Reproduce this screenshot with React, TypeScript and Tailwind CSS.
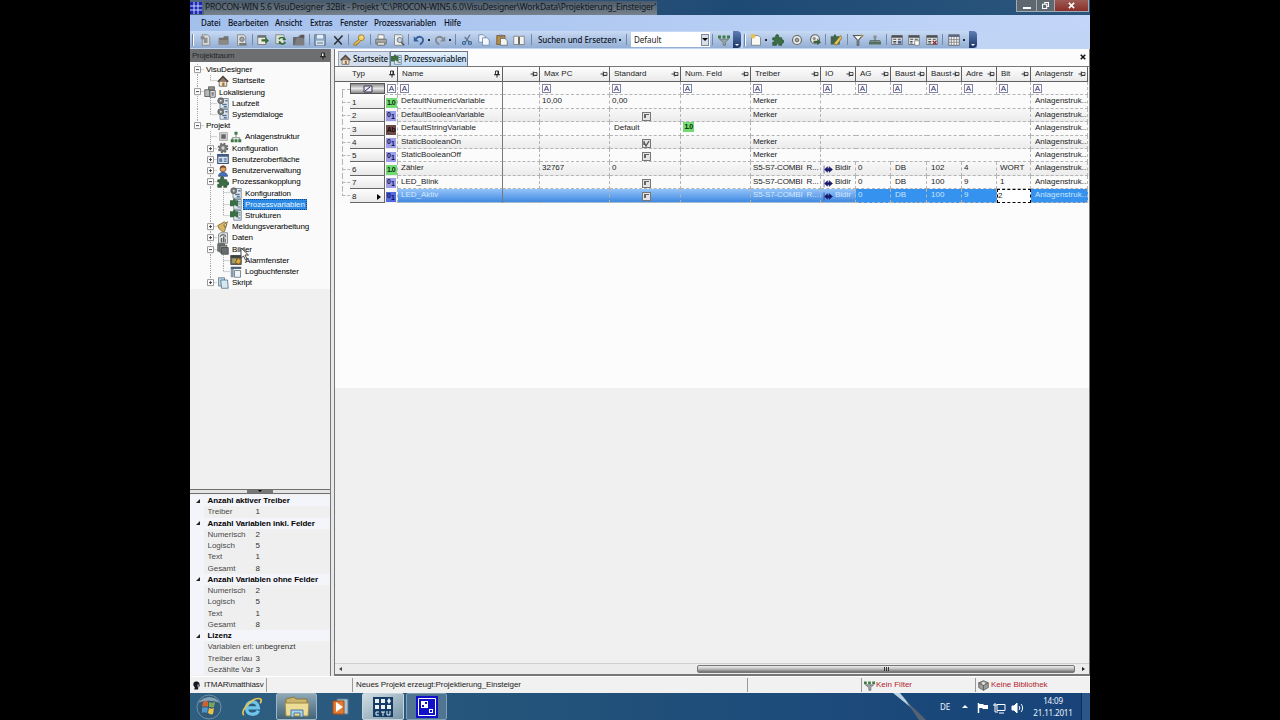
import { Fragment } from "react";
import type { ReactNode } from "react";
import clsx from "clsx";

const ICONS: Record<string, ReactNode> = {
    doc: (
        <>
            <path d="M3 1h7l3 3v11H3z" fill="#d9dbda" stroke="#77797c" />
            <path d="M5 5h5v7H5z" fill="#8f9191" />
            <path d="M1 3h5v4H1z" fill="#858789" />
        </>
    ),
    folder: (
        <>
            <path d="M1 5h6l1-2h6v11H1z" fill="#74736f" />
            <path d="M1 8h12v6H1z" fill="#8a8983" />
        </>
    ),
    docSearch: (
        <>
            <path d="M2 1h9l2 3v11H2z" fill="#dcdedd" stroke="#77797c" />
            <circle cx="8" cy="7" r="3" fill="#9ea3a5" stroke="#66696b" />
            <path d="M4 12h9l2 3H5z" fill="#777" />
        </>
    ),
    export: (
        <>
            <path d="M1 2h11v12H1z" fill="#e9ebe4" stroke="#696b6d" />
            <path d="M1 2h11v3H1z" fill="#6e7278" />
            <path d="M6 7h5V4l5 5-5 4v-3H6z" fill="#3e6b34" />
        </>
    ),
    refresh: (
        <>
            <path d="M1 1h11v12H1z" fill="#dfe3dc" stroke="#71757a" />
            <path d="M5 7c2-3 6-3 8 0M14 11c-2 3-6 3-8 0" stroke="#2f6c32" strokeWidth="2" fill="none" />
            <path d="M12 4l3 4h-5zM5 14V9l4 2z" fill="#2f6c32" />
        </>
    ),
    closedFolder: (
        <>
            <path d="M0 4h7l1-2h7v13H0z" fill="#66686b" />
            <path d="M5 5h9l1 10H2z" fill="#7c7e80" />
            <path d="M10 1h5v4h-5z" fill="#5b5456" />
        </>
    ),
    save: (
        <>
            <path d="M1 1h14v14H1z" fill="#8da6c4" stroke="#48617c" />
            <path d="M4 1h8v5H4z" fill="#e5edf6" />
            <path d="M3 9h10v6H3z" fill="#f1f5f9" />
            <path d="M4 11h8M4 13h8" stroke="#64788d" />
        </>
    ),
    cross: <path d="M3 3l10 11M14 2L3 14" stroke="#30343c" strokeWidth="2.2" />,
    key: (
        <>
            <circle cx="11" cy="5" r="4" fill="#efcf5d" stroke="#8f6b1f" />
            <path d="M8 7l-7 6v2h4v-2h2l3-4" fill="#e4b945" stroke="#8f6b1f" />
            <circle cx="12" cy="4" r="1" fill="#fff" />
        </>
    ),
    printer: (
        <>
            <path d="M4 1h8v6H4z" fill="#f4f4f0" stroke="#6f7271" />
            <path d="M1 7h14v6H1z" fill="#a8aaa8" stroke="#5e605f" />
            <path d="M3 11h10v4H3z" fill="#dddcd0" stroke="#5e605f" />
        </>
    ),
    preview: (
        <>
            <path d="M2 1h9l2 2v12H2z" fill="#eef0ee" stroke="#71757a" />
            <circle cx="9" cy="8" r="3.5" fill="#c0cfda" stroke="#5b646d" />
            <path d="M11 11l4 4" stroke="#4a525b" strokeWidth="2" />
        </>
    ),
    undo: (
        <>
            <path d="M4 6c5-5 11-1 9 4-1 2-2 3-4 4" stroke="#35609d" strokeWidth="2.4" fill="none" />
            <path d="M1 3v7h7z" fill="#35609d" />
        </>
    ),
    redo: (
        <>
            <path d="M12 6C7 1 1 5 3 10c1 2 2 3 4 4" stroke="#85888c" strokeWidth="2.4" fill="none" />
            <path d="M15 3v7H8z" fill="#85888c" />
        </>
    ),
    cut: (
        <>
            <path d="M12 1L6 11M5 4l6 7" stroke="#5f7386" strokeWidth="1.6" />
            <circle cx="4" cy="12" r="2" fill="none" stroke="#315f93" strokeWidth="1.6" />
            <circle cx="12" cy="12" r="2" fill="none" stroke="#315f93" strokeWidth="1.6" />
        </>
    ),
    copy: (
        <>
            <path d="M1 1h6l3 3v7H1z" fill="#f3f7fb" stroke="#5f7da5" />
            <path d="M6 5h6l3 3v7H6z" fill="#f3f7fb" stroke="#5f7da5" />
        </>
    ),
    paste: (
        <>
            <path d="M1 2h11v12H1z" fill="#b78c42" stroke="#6c5326" />
            <path d="M4 1h5v3H4z" fill="#777" />
            <path d="M6 6h6l3 3v6H6z" fill="#f5f5f0" stroke="#60656e" />
        </>
    ),
    book: (
        <>
            <path d="M1 3h6l1 1 1-1h6v11H9l-1 1-1-1H1z" fill="#f4f3ee" stroke="#6d6f72" />
            <path d="M8 4v10" stroke="#3b3d40" strokeWidth="2" />
        </>
    ),
    filterTree: (
        <>
            <path d="M0 2h4v4H0zM6 2h4v4H6zM12 2h4v4h-4z" fill="#3f7b47" />
            <path d="M2 7h12l-4 4v4H7v-4z" fill="#98a4a5" stroke="#66706f" />
        </>
    ),
    newDoc: (
        <>
            <path d="M2 2h9l3 3v10H2z" fill="#f8f8f4" stroke="#6f7278" />
            <circle cx="4" cy="3" r="3" fill="#e8c04d" />
        </>
    ),
    puzzle: (
        <path
            d="M1 5h4c-2-4 4-6 4-2v2h4v3c4-1 4 5 0 4v3H9c1-3-4-3-3 0H1v-4c3 1 3-4 0-3z"
            fill="#3c6e45"
            stroke="#29502f"
        />
    ),
    target: (
        <>
            <circle cx="8" cy="8" r="6" fill="#e9eae6" stroke="#686a6a" strokeWidth="1.6" />
            <circle cx="8" cy="8" r="2.5" fill="#9da09d" stroke="#555" />
        </>
    ),
    targetGreen: (
        <>
            <circle cx="8" cy="7" r="6" fill="#e9eae6" stroke="#686a6a" strokeWidth="1.6" />
            <path d="M6 9h5V6l5 5-5 4v-3H6z" fill="#3e5f3e" />
            <circle cx="7" cy="6" r="2" fill="#888" />
        </>
    ),
    puzzleKey: (
        <>
            <path d="M1 3h4c-1-3 4-3 3 0h5v11H1z" fill="#41634a" />
            <path d="M14 2l-9 11 4 2 7-10z" fill="#dcc15c" stroke="#7d6923" />
        </>
    ),
    filter: (
        <>
            <path d="M2 2h12l-5 6v7H7V8z" fill="#f3f3f1" stroke="#55585c" strokeWidth="1.5" />
            <path d="M12 1l2 3" stroke="#b59b4a" strokeWidth="2" />
        </>
    ),
    network: (
        <>
            <path d="M6 2h4v4H6z" fill="#8a8d8f" />
            <path d="M8 6v3M1 9h14" stroke="#56605a" strokeWidth="1.5" />
            <path d="M0 10h16v4H0z" fill="#52715a" />
        </>
    ),
    table: (
        <>
            <path d="M1 2h14v12H1z" fill="#eceded" stroke="#55595c" />
            <path d="M1 2h14v3H1z" fill="#4c5054" />
            <path d="M3 7h4M9 7h4M3 10h4M3 12h4" stroke="#3f4448" strokeWidth="1.6" />
            <path d="M9 9h5v4H9z" fill="#47638f" />
        </>
    ),
    tableDoc: (
        <>
            <path d="M1 2h14v12H1z" fill="#eceded" stroke="#55595c" />
            <path d="M1 2h14v3H1z" fill="#4c5054" />
            <path d="M3 7h4M9 7h4M3 10h3M3 12h3" stroke="#3f4448" strokeWidth="1.6" />
            <path d="M9 9h6v6H9z" fill="#fff" stroke="#777" />
        </>
    ),
    tableRed: (
        <>
            <path d="M1 2h14v12H1z" fill="#eceded" stroke="#55595c" />
            <path d="M1 2h14v3H1z" fill="#4c5054" />
            <path d="M3 7h4M9 7h4M3 10h4M3 12h4" stroke="#3f4448" strokeWidth="1.6" />
            <path d="M9 9l5 5M14 9l-5 5" stroke="#8a3038" strokeWidth="1.8" />
        </>
    ),
    grid: (
        <>
            <path d="M1 1h14v14H1z" fill="#f6f6f6" stroke="#4c5054" />
            <path d="M1 1h14v3H1z" fill="#5c6b86" />
            <path d="M1 7.5h14M1 11h14M4.5 4v11M8 4v11M11.5 4v11" stroke="#777" />
        </>
    ),
    home: (
        <>
            <path d="M3 8h10v7H3z" fill="#eee6d4" stroke="#5e5148" />
            <path d="M1 9l7-7 7 7" fill="#8b7768" stroke="#4e4137" strokeWidth="2" />
            <path d="M7 10h3v5H7z" fill="#a8743c" />
        </>
    ),
    language: (
        <>
            <path d="M1 5h7v9H1z" fill="#b7b8b8" stroke="#454749" />
            <path d="M6 1h8v4H6z" fill="#8e9092" stroke="#555" />
            <path d="M8 6h7v9H8z" fill="#dfe2e4" stroke="#454749" />
            <path d="M10 8h3v5h-3z" fill="#7d8689" />
        </>
    ),
    gearPage: (
        <>
            <path d="M4 2h11v13H4z" fill="#e6eaec" stroke="#5c7487" />
            <path d="M7 10h6M9 13h4M11 5h3" stroke="#4c7298" strokeWidth="1.8" />
            <circle cx="5" cy="5" r="4" fill="#7a7c7d" stroke="#55585a" />
            <circle cx="5" cy="5" r="1.3" fill="#ddd" />
        </>
    ),
    puzzlePage: (
        <>
            <path d="M5 2h10v13H5z" fill="#e6eaec" stroke="#5c7487" />
            <path d="M11 5h3M10 12h4M12 8h2" stroke="#4c7298" strokeWidth="1.6" />
            <path d="M0 3h4c0-3 4-3 3 0h4v8H8c0-2-3-2-3 0H0z" fill="#3c6e45" />
        </>
    ),
    gear: (
        <>
            <circle cx="8" cy="8" r="5.6" fill="#77797a" stroke="#67696a" strokeWidth="3" strokeDasharray="2.4 2" />
            <circle cx="8" cy="8" r="5" fill="#77797a" />
            <circle cx="8" cy="8" r="2.2" fill="#d2d3d3" />
        </>
    ),
    structure: (
        <>
            <path d="M8 5v3M3 12V9h10v3" fill="none" stroke="#58705c" />
            <path d="M6 1h4v4H6zM1 11h4v4H1zM6 11h4v4H6zM11 11h4v4h-4z" fill="#3b7a45" />
        </>
    ),
    checkBox: (
        <>
            <path d="M1 1h14v14H1z" fill="#d5d5d5" stroke="#888" />
            <path d="M4 4h8v8H4z" fill="#666" />
        </>
    ),
    windowUi: (
        <>
            <path d="M1 2h14v12H1z" fill="#dce4ef" stroke="#3d536e" strokeWidth="1.5" />
            <path d="M1 2h14v3H1z" fill="#405e8a" />
            <path d="M3 7h4v5H3zM9 7h4v2H9zM9 10h4v2H9z" fill="#607fa9" />
        </>
    ),
    user: (
        <>
            <circle cx="8" cy="5" r="4" fill="#e0a060" stroke="#65442b" />
            <path d="M4 5c0-5 8-5 8-1-3-1-5-1-8 1z" fill="#7a4526" />
            <path d="M2 15c0-7 12-7 12 0z" fill="#4872b8" stroke="#2f4d87" />
        </>
    ),
    bell: (
        <>
            <path d="M1 6l9-5 3 3-3 10c-3 1-8-3-9-8z" fill="#d7b565" stroke="#765f31" />
            <path d="M9 5l5-4-3 8z" fill="#f4e4a1" stroke="#6c5630" />
        </>
    ),
    data: (
        <>
            <path d="M2 3l3-2h9v14H2z" fill="#e2e4e5" stroke="#707274" />
            <path d="M5 8h2v6H5zM8 6h2v8H8zM11 9h1v5h-1z" fill="#5e6163" />
            <path d="M4 6c2-3 6-3 8 0" stroke="#3c4042" strokeWidth="1.4" fill="none" />
        </>
    ),
    images: (
        <>
            <path d="M1 1h9v10H1z" fill="#777b7b" stroke="#4c5050" />
            <path d="M4 3h9v10H4z" fill="#8d9292" stroke="#4c5050" />
            <path d="M6 6h9v9H6z" fill="#686d6d" stroke="#444" />
        </>
    ),
    alarm: (
        <>
            <path d="M1 2h14v12H1z" fill="#6c6e5c" stroke="#3b3b38" />
            <path d="M1 2h14v3H1z" fill="#3b3f3d" />
            <path d="M3 6h5v6H3z" fill="#a8a263" />
            <path d="M11 5l4 4-3 5-5-3z" fill="#dfa73f" stroke="#6d4f1c" />
        </>
    ),
    logbook: (
        <>
            <path d="M1 1h14v3H1z" fill="#4d6379" />
            <path d="M1 4h4v11H1z" fill="#859aac" />
            <path d="M6 6h8v9H6z" fill="#eff3f6" stroke="#55697b" />
        </>
    ),
    script: (
        <>
            <path d="M2 1h8v11H2z" fill="#bfd3df" stroke="#55748b" />
            <path d="M5 4h9l1 11H6z" fill="#d6e7f1" stroke="#44657d" />
        </>
    ),
    cube: (
        <>
            <path d="M8 1l7 3v7l-7 4-7-4V4z" fill="#9a9b9a" stroke="#4b4c4b" />
            <path d="M1 4l7 4 7-4M8 8v7" stroke="#4b4c4b" fill="none" />
            <circle cx="8" cy="5" r="2" fill="#e7e7e5" />
        </>
    ),
    head: (
        <>
            <path d="M3 3c2-3 9-3 10 1l1 5-3 2v4H4l1-4c-3-2-3-5-2-8z" fill="#16161f" />
            <path d="M9 6h4v5h-3z" fill="#8f8aa0" />
        </>
    ),
    pinDown: (
        <>
            <path d="M5 2h6v7H5z" fill="#f5f5f5" stroke="#222" strokeWidth="1.8" />
            <path d="M10 2v7M2 9.500h12M8 10v5" stroke="#222" strokeWidth="2" />
        </>
    ),
    pinSide: (
        <>
            <path d="M7 5h7v6H7z" fill="#f5f5f5" stroke="#333" strokeWidth="1.6" />
            <path d="M6.500 3v10M1 8h5M7 10.500h7" stroke="#333" strokeWidth="1.800" />
        </>
    ),
    bidir: <path d="M1 1v14M2 8l5-5v3h3V3l6 5-6 5v-3H7v3z" fill="#17176a" stroke="#17176a" />,
};

function Icon({ name, className }: { name: string; className?: string }) {
    return (
        <svg viewBox="0 0 16 16" className={clsx("shrink-0", className ?? "size-3")}>
            {ICONS[name]}
        </svg>
    );
}

// [icon, slot width]; "|" is a separator and "." a drop-down dot
const FILE_TOOLS: [string, string][] = [
    ["doc", "w-[18px]"],
    ["folder", "w-[18px]"],
    ["docSearch", "w-[18px]"],
    ["|", "w-[3px]"],
    ["export", "w-[18px]"],
    ["refresh", "w-[18px]"],
    ["closedFolder", "w-[17px]"],
    ["|", "w-[4px]"],
    ["save", "w-[18px]"],
    ["cross", "w-[17px]"],
    ["|", "w-[4px]"],
    ["key", "w-[18px]"],
    ["|", "w-[4px]"],
    ["printer", "w-[18px]"],
    ["preview", "w-[17px]"],
    ["|", "w-[3px]"],
    ["undo", "w-[17px]"],
    [".", "w-[4px]"],
    ["redo", "w-[17px]"],
    [".", "w-[4px]"],
    ["|", "w-[6px]"],
    ["cut", "w-[17px]"],
    ["copy", "w-[18px]"],
    ["paste", "w-[17px]"],
    ["book", "w-[18px]"],
    ["|", "w-[6px]"],
];

const VARIABLE_TOOLS: [string, string][] = [
    ["newDoc", "w-[16px]"],
    [".", "w-[4px]"],
    ["puzzle", "w-[19px]"],
    ["target", "w-[19px]"],
    ["targetGreen", "w-[18px]"],
    ["|", "w-[3px]"],
    ["puzzleKey", "w-[18px]"],
    ["|", "w-[4px]"],
    ["filter", "w-[17px]"],
    ["network", "w-[18px]"],
    ["|", "w-[4px]"],
    ["table", "w-[17px]"],
    ["tableDoc", "w-[18px]"],
    ["tableRed", "w-[17px]"],
    ["|", "w-[5px]"],
    ["grid", "w-[17px]"],
    [".", "w-[3px]"],
];

function Tools({ items }: { items: [string, string][] }) {
    return (
        <>
            {items.map(([name, width], i) => (
                <div key={i} className={clsx("flex shrink-0 items-center justify-center", width)}>
                    {name === "|" && <span className="h-[11px] w-px bg-[#7188a8]" />}
                    {name === "." && <span className="size-[2px] bg-[#222a38]" />}
                    {name.length > 1 && <Icon name={name} />}
                </div>
            ))}
        </>
    );
}

function ToolbarEnd() {
    return (
        <div className="flex h-[17px] w-[8px] shrink-0 items-end justify-center rounded-r-sm bg-linear-to-b from-[#5f7fb5] to-[#1c3466] pb-[2px]">
            <span className="border-x-2 border-t-2 border-x-transparent border-t-white" />
        </div>
    );
}

function TitleBar() {
    return (
        <div className="flex h-[15px] items-center bg-linear-to-r from-[#536779] via-[#1d4a75] via-60% to-[#2b557c]">
            <svg viewBox="0 0 12 12" className="size-3 shrink-0 bg-[#1b28b0]">
                <path d="M0 4h12M0 8h12M4 0v12M8 0v12" stroke="#cdd4ff" strokeWidth="1" />
            </svg>
            <div className="ml-[2px] flex h-[14px] w-[453px] items-center bg-linear-to-b from-[#4b5a69] to-[#77828c] font-['Noto_Sans'] text-[8.5px] tracking-[-0.21px] text-[#10161c]">
                <span className="ml-px whitespace-nowrap">
                    PROCON-WIN 5.6 VisuDesigner 32Bit - Projekt 'C:\PROCON-WIN5.6.0\VisuDesigner\WorkData\Projektierung_Einsteiger'
                </span>
            </div>
            <div className="ml-auto mr-px flex h-[12px] self-start border border-t-0 border-[#a1aab2]">
                <div className="flex w-[20px] items-center justify-center border-r border-[#a1aab2] bg-[#5d6870]">
                    <span className="mt-1 h-[2px] w-[8px] bg-white" />
                </div>
                <div className="flex w-[18px] items-center justify-center border-r border-[#a1aab2] bg-[#5d6870]">
                    <svg viewBox="0 0 8 8" className="size-[7px]" fill="none" stroke="#fff" strokeWidth="1.2">
                        <path d="M3 2V.6h4.400V5H6" />
                        <path d="M.6 2.600h4.800v4.800H.6z" />
                    </svg>
                </div>
                <div className="flex w-[33px] items-center justify-center bg-linear-to-b from-[#9c5a55] to-[#8a2d27]">
                    <svg viewBox="0 0 8 8" className="size-[7px]" stroke="#fff" strokeWidth="1.8">
                        <path d="M1 1l6 6M7 1L1 7" />
                    </svg>
                </div>
            </div>
        </div>
    );
}

const MENU: [string, string][] = [
    ["Datei", "w-[27px]"],
    ["Bearbeiten", "w-[47px]"],
    ["Ansicht", "w-[35px]"],
    ["Extras", "w-[30px]"],
    ["Fenster", "w-[34px]"],
    ["Prozessvariablen", "w-[70px]"],
    ["Hilfe", "w-[24px]"],
];

function MenuBar() {
    return (
        <div className="flex h-4 items-center bg-linear-to-r from-[#a3c0ec] to-[#c3d6f9] pl-[11px] font-['Noto_Sans'] text-[8px] font-medium tracking-[-0.16px] text-[#0a1020]">
            {MENU.map(([label, width]) => (
                <span key={label} className={clsx("whitespace-nowrap", width)}>
                    {label}
                </span>
            ))}
        </div>
    );
}

function Toolbar() {
    return (
        <div className="flex h-[18px] bg-[#c0d4f6]">
            <div className="flex h-[17px] items-center bg-linear-to-b from-[#c8daf4] to-[#93aed3] pl-[2px]">
                <span className="h-3 w-[2px] border-l border-[#6b83a6] bg-white" />
                <div className="w-[3px]" />
                <Tools items={FILE_TOOLS} />
                <span className="ml-[4px] w-[79px] whitespace-nowrap font-['Noto_Sans'] text-[8px] font-medium tracking-[-0.06px] text-[#10182a]">
                    Suchen und Ersetzen
                </span>
                <Tools items={[[".", "w-[5px]"], ["|", "w-[9px]"]]} />
                <div className="flex h-[15px] w-[79px] items-center justify-between bg-white pl-[3px] pr-px font-['Noto_Sans'] text-[8px] text-[#222]">
                    Default
                    <span className="flex h-3 w-[8px] items-center justify-center border border-[#7d8998] bg-[#d5dfeb]">
                        <span className="border-x-[3px] border-t-[3px] border-x-transparent border-t-black" />
                    </span>
                </div>
                <Tools items={[["|", "w-[5px]"], ["filterTree", "w-[18px]"]]} />
                <ToolbarEnd />
            </div>
            <div className="ml-[2px] flex h-[17px] items-center bg-linear-to-b from-[#c8daf4] to-[#93aed3] pl-px">
                <span className="mr-[2px] h-3 w-[2px] border-l border-[#6b83a6] bg-white" />
                <Tools items={VARIABLE_TOOLS} />
                <div className="w-[4px]" />
                <ToolbarEnd />
            </div>
        </div>
    );
}

interface TreeNode {
    label: string;
    level: number;
    icons?: string[];
    toggle?: "+" | "-";
    selected?: boolean;
    last?: boolean;
}

const TREE: TreeNode[] = [
    { label: "VisuDesigner", level: 0, toggle: "-" },
    { label: "Startseite", level: 1, icons: ["home"], last: true },
    { label: "Lokalisierung", level: 0, toggle: "-", icons: ["language"] },
    { label: "Laufzeit", level: 1, icons: ["gearPage"] },
    { label: "Systemdialoge", level: 1, icons: ["gearPage"], last: true },
    { label: "Projekt", level: 0, toggle: "-", last: true },
    { label: "Anlagenstruktur", level: 1, icons: ["checkBox", "structure"] },
    { label: "Konfiguration", level: 1, toggle: "+", icons: ["gear"] },
    { label: "Benutzeroberfläche", level: 1, toggle: "+", icons: ["windowUi"] },
    { label: "Benutzerverwaltung", level: 1, toggle: "+", icons: ["user"] },
    { label: "Prozessankopplung", level: 1, toggle: "-", icons: ["puzzle"] },
    { label: "Konfiguration", level: 2, icons: ["gearPage"] },
    { label: "Prozessvariablen", level: 2, icons: ["puzzlePage"], selected: true },
    { label: "Strukturen", level: 2, icons: ["puzzlePage"], last: true },
    { label: "Meldungsverarbeitung", level: 1, toggle: "+", icons: ["bell"] },
    { label: "Daten", level: 1, toggle: "+", icons: ["data"] },
    { label: "Bilder", level: 1, toggle: "-", icons: ["images"] },
    { label: "Alarmfenster", level: 2, icons: ["alarm"] },
    { label: "Logbuchfenster", level: 2, icons: ["logbook"], last: true },
    { label: "Skript", level: 1, toggle: "+", icons: ["script"], last: true },
];

function Branch({ toggle, last }: { toggle?: string; last?: boolean }) {
    return (
        <svg viewBox="0 0 13 11" className="h-[11.22px] w-[13px] shrink-0" fill="none">
            <path d={last ? "M6.500 0V6M6.500 5.500H13" : "M6.500 0V11M6.500 5.500H13"} stroke="#a5a5a5" strokeDasharray="1 1" />
            {toggle && (
                <>
                    <path d="M3.500 2.500h6v6h-6z" fill="#fff" stroke="#999" />
                    <path d="M5 5.500h3" stroke="#444" />
                    {toggle === "+" && <path d="M6.500 4v3" stroke="#444" />}
                </>
            )}
        </svg>
    );
}

function TreeLine({ visible }: { visible: boolean }) {
    return (
        <span className="flex h-full w-[13px] shrink-0 justify-center">
            {visible && <span className="border-l border-dotted border-[#a5a5a5]" />}
        </span>
    );
}

function ProjectTree() {
    return (
        <div className="relative bg-[#fafafa] pb-px pl-px pt-[2px] text-[8px] text-black">
            {TREE.map((node, i) => (
                <div key={i} className="flex h-[11.22px] items-center">
                    {node.level > 0 && <TreeLine visible={i < 5} />}
                    {node.level > 1 && <TreeLine visible />}
                    <Branch toggle={node.toggle} last={node.last} />
                    {node.icons?.map((icon) => (
                        <Icon key={icon} name={icon} className={icon === "checkBox" ? "mx-[2px] size-[9px]" : "size-3"} />
                    ))}
                    <span
                        className={clsx(
                            "whitespace-nowrap px-[2px] leading-[11px] tracking-[-0.1px]",
                            node.icons && "ml-px",
                            node.selected && "bg-[#2b8ae6] text-[#e8f4ff] outline-1 -outline-offset-1 outline-dotted outline-[#14457c]"
                        )}
                    >
                        {node.label}
                    </span>
                </div>
            ))}
            <svg viewBox="0 0 10 14" className="absolute left-[50px] top-[185px] h-[14px] w-[10px]">
                <path d="M1 1v10l2.500-2 2 4 1.500-1-2-4h3.500z" fill="#fff" stroke="#444" />
            </svg>
        </div>
    );
}

const STATS: { title: string; rows: [string, string][] }[] = [
    { title: "Anzahl aktiver Treiber", rows: [["Treiber", "1"]] },
    {
        title: "Anzahl Variablen inkl. Felder",
        rows: [["Numerisch", "2"], ["Logisch", "5"], ["Text", "1"], ["Gesamt", "8"]],
    },
    {
        title: "Anzahl Variablen ohne Felder",
        rows: [["Numerisch", "2"], ["Logisch", "5"], ["Text", "1"], ["Gesamt", "8"]],
    },
    {
        title: "Lizenz",
        rows: [["Variablen erl:", "unbegrenzt"], ["Treiber erlau", "3"], ["Gezählte Var", "3"]],
    },
];

function Stats() {
    return (
        <div className="h-[182px] overflow-hidden bg-[#f0f0f0] pt-px text-[8px] leading-[11.25px]">
            {STATS.map((group) => (
                <Fragment key={group.title}>
                    <div className="flex h-[11.25px] items-center bg-[#f4f4fb]">
                        <svg viewBox="0 0 4 4" className="ml-[6px] size-1">
                            <path d="M4 0v4H0z" fill="#222" />
                        </svg>
                        <span className="ml-[7.5px] whitespace-nowrap font-bold tracking-[-0.04px] text-black">{group.title}</span>
                    </div>
                    {group.rows.map(([label, value]) => (
                        <div key={label} className="flex h-[11.25px] bg-linear-to-r from-[#f4f4fb] from-10% to-[#efefef] to-10% pl-[17.5px] text-[#4a4a4a]">
                            <span className="w-[48px] overflow-hidden whitespace-nowrap tracking-[-0.02px]">{label}</span>
                            <span className="text-[#333]">{value}</span>
                        </div>
                    ))}
                </Fragment>
            ))}
        </div>
    );
}

function Sidebar() {
    return (
        <div className="flex w-[141px] flex-col border-r border-[#777]">
            <div className="flex h-[13px] items-center justify-between bg-[#6d6e70] pl-[2px] pr-[3px] text-[8px] tracking-[-0.25px] text-[#26282a]">
                Projektbaum
                <Icon name="pinDown" className="size-[8px]" />
            </div>
            <div className="flex-1 bg-[#f0f0f0]">
                <ProjectTree />
            </div>
            <div className="flex h-[5px] items-center justify-center border-y border-[#707070] bg-[#e4e4e4]">
                <span className="flex h-[3px] w-[26px] justify-center bg-[#777]">
                    <span className="border-x-2 border-t-2 border-x-transparent border-t-black" />
                </span>
            </div>
            <Stats />
        </div>
    );
}

const COLS =
    "grid grid-rows-[minmax(0,1fr)] grid-cols-[15px_35px_13px_105px_37px_70px_71px_70px_70px_35px_35px_36px_35px_35px_34px_57px]";

const HEADERS = ["", "Max PC", "Standard", "Num. Feld", "Treiber", "IO", "AG", "Baust", "Baust", "Adre", "Bit", "Anlagenstr"];

interface Variable {
    kind: "num" | "bool" | "text";
    name: string;
    max?: string;
    standard?: string;
    check?: "on" | "off";
    field?: boolean;
    driver?: string;
    s7?: string[];
    selected?: boolean;
}

const VARIABLES: Variable[] = [
    { kind: "num", name: "DefaultNumericVariable", max: "10,00", standard: "0,00", driver: "Merker" },
    { kind: "bool", name: "DefaultBooleanVariable", check: "off", driver: "Merker" },
    { kind: "text", name: "DefaultStringVariable", standard: "Default", field: true },
    { kind: "bool", name: "StaticBooleanOn", check: "on", driver: "Merker" },
    { kind: "bool", name: "StaticBooleanOff", check: "off", driver: "Merker" },
    { kind: "num", name: "Zähler", max: "32767", standard: "0", driver: "S5-S7-COMBI  R...", s7: ["0", "DB", "102", "4", "WORT"] },
    { kind: "bool", name: "LED_Blink", check: "off", driver: "S5-S7-COMBI  R...", s7: ["0", "DB", "100", "9", "1"] },
    {
        kind: "bool",
        name: "LED_Aktiv",
        check: "off",
        driver: "S5-S7-COMBI  R...",
        s7: ["0", "DB", "100", "9", "2"],
        selected: true,
    },
];

function KindIcon({ kind, active }: { kind: Variable["kind"]; active?: boolean }) {
    if (kind === "bool") {
        return (
            <span
                className={clsx(
                    "flex size-[10px] shrink-0 justify-center text-[7px] font-bold leading-[7px] text-[#10104a]",
                    active ? "bg-[#5468e0]" : "bg-[#9c9ce8]"
                )}
            >
                <span>0</span>
                <span className="pt-[2px]">1</span>
            </span>
        );
    }
    return (
        <span
            className={clsx(
                "flex h-[10px] shrink-0 items-center justify-center overflow-hidden text-[7px] font-bold tracking-[-0.5px]",
                kind === "num" ? "w-[11px] bg-[#72da72] text-[#0b2c0b]" : "w-[10px] bg-[#6b4a48] text-[#1e0e0e]"
            )}
        >
            {kind === "num" ? "1.0" : "Ab"}
        </span>
    );
}

function FilterBox() {
    return (
        <span className="flex size-[9px] shrink-0 items-center justify-center border border-[#8585a3] bg-white text-[8px] leading-none text-[#2b2b66]">
            A
        </span>
    );
}

function Check({ state }: { state: "on" | "off" }) {
    return (
        <span className="mx-auto flex size-[9px] items-center justify-center border border-[#777] bg-[#e4e4e4]">
            <svg viewBox="0 0 7 7" className="size-[7px]">
                {state === "on" ? (
                    <path d="M1 2l2 4 3-5M1 5V1" fill="none" stroke="#555" strokeWidth="1.3" />
                ) : (
                    <path d="M1 5V1h5v1H3v3z" fill="#666" />
                )}
            </svg>
        </span>
    );
}

function Cell({ children, className, open }: { children?: ReactNode; className?: string; open?: boolean }) {
    return (
        <div
            className={clsx(
                "flex min-w-0 items-start overflow-hidden whitespace-pre border-b border-dashed border-[#b4b4b4] pl-[2px]",
                !open && "border-r",
                className
            )}
        >
            {children}
        </div>
    );
}

function VariableRow({ row, index }: { row: Variable; index: number }) {
    const even = index % 2 === 1;
    const glow = row.selected && "bg-linear-to-b from-[#94c4fa] to-[#3f89e0] border-[#5a8fd0] text-[#d3e8ff]";
    const solid = row.selected && "bg-[#3592ee] border-[#8fbfee] text-[#c8e6ff]";
    return (
        <div
            className={clsx(
                COLS,
                "h-[13.4px] leading-[12.5px]",
                even ? "bg-linear-to-b from-[#f8f8f8] to-[#ebebeb]" : "bg-[#fbfbfb]"
            )}
        >
            <div className={clsx("flex items-center bg-[#fafafa] pl-[7px]")}>
                <span className={clsx("border-l border-dashed border-[#b4b4b4]", row.selected ? "h-1/2 self-start" : "h-full")} />
                <span className="w-full border-t border-dashed border-[#b4b4b4]" />
            </div>
            <div className="flex items-center justify-between border-b border-r border-[#666] bg-linear-to-b from-[#fdfdfd] to-[#e9e9e9] pl-[2px] pr-[3px] pt-[3px]">
                {index + 1}
                {row.selected && <span className="border-y-[3px] border-l-4 border-y-transparent border-l-black" />}
            </div>
            <div className="flex items-center justify-center border-r border-dashed border-[#b4b4b4] pt-[2px]">
                <KindIcon kind={row.kind} active={row.selected} />
            </div>
            <Cell className={clsx("pl-[3px]! [border-right-style:solid]", glow, "border-r-[#777]!")}>{row.name}</Cell>
            <Cell open={row.selected} className={clsx(glow)} />
            <Cell className={clsx(glow)}>{row.max}</Cell>
            <Cell className={clsx(glow)}>
                {row.check ? (
                    <span className="flex w-full pt-[3px]">
                        <Check state={row.check} />
                    </span>
                ) : (
                    <span className={row.field ? "pl-[2px]" : ""}>{row.standard}</span>
                )}
            </Cell>
            <Cell className={clsx("items-end", glow)}>{row.field && <KindIcon kind="num" />}</Cell>
            <Cell open={!row.driver} className={clsx(glow)}>
                <span className="tracking-[-0.15px]">{row.driver}</span>
            </Cell>
            <Cell open={!row.s7} className={clsx(glow)}>
                {row.s7 && (
                    <>
                        <Icon name="bidir" className="mt-[3px] h-[9px] w-[10px]" />
                        <span className="ml-[2px]">Bidir</span>
                    </>
                )}
            </Cell>
            {[0, 1, 2, 3].map((i) => (
                <Cell key={i} open={!row.s7} className={clsx(solid)}>
                    <span className={i === 1 || i === 2 ? "pl-[2px]" : ""}>{row.s7?.[i]}</span>
                </Cell>
            ))}
            <Cell className={clsx(row.selected && "border border-black! bg-white pl-0!")}>
                <span className={row.selected ? "" : "pl-px"}>{row.s7?.[4]}</span>
            </Cell>
            <Cell className={clsx("pl-[4px]!", solid)}>Anlagenstruk...</Cell>
        </div>
    );
}

function HeaderCell({ label, className, pin = "pinSide" }: { label: string; className?: string; pin?: string }) {
    return (
        <div
            className={clsx(
                "flex items-center justify-between overflow-hidden whitespace-nowrap border-b border-r border-[#606060] pr-px",
                className ?? "pl-[4px]"
            )}
        >
            {label}
            <Icon name={pin} className="ml-auto size-[8px]" />
        </div>
    );
}

function VariableTable() {
    return (
        <div className="text-[8px] text-[#1c1c1c]">
            <div className={clsx(COLS, "h-4 border-t border-[#777] bg-linear-to-b from-[#fdfdfd] to-[#e9e9e9]")}>
                <HeaderCell label="Typ" className="col-span-3 pl-[17px]" pin="pinDown" />
                <HeaderCell label="Name" pin="pinDown" />
                {HEADERS.map((label, i) => (
                    <HeaderCell key={i} label={label} />
                ))}
            </div>
            <div className={clsx(COLS, "h-[13.4px] bg-[#fbfbfb]")}>
                <div className="flex items-end pl-[7px]">
                    <span className="h-1/2 w-full border-l border-t border-dashed border-[#b4b4b4]" />
                </div>
                <div className="my-px flex items-center justify-center border border-[#555] bg-linear-to-b from-[#8b8b8b] via-[#e8e8e8] to-[#898989]">
                    <svg viewBox="0 0 10 8" className="h-2 w-[10px]" fill="#e9e9f4" stroke="#33334f">
                        <path d="M1 1h8v6H1zM2 6l5-4" />
                    </svg>
                </div>
                {Array.from({ length: 14 }, (_, i) => (
                    <Cell key={i} className={clsx("items-center pt-[2px]", i === 1 && "border-r-[#777] [border-right-style:solid]")}>
                        {i !== 2 && <FilterBox />}
                    </Cell>
                ))}
            </div>
            {VARIABLES.map((row, i) => (
                <VariableRow key={row.name} row={row} index={i} />
            ))}
        </div>
    );
}

function Editor() {
    return (
        <div className="flex min-w-0 flex-1 flex-col border-x border-[#777] bg-[#f0f0f0]">
            <div className="flex h-[17px] items-end bg-[#fcfcfc] font-['Noto_Sans'] text-[8px] font-medium text-[#101820]">
                <div className="ml-[3px] flex h-[15px] w-[52px] items-center gap-[2px] border border-b-0 border-[#9aa5b4] bg-[#d3dfef] pl-px tracking-[-0.18px]">
                    <Icon name="home" className="size-[11px]" />
                    Startseite
                </div>
                <div className="flex h-[15px] w-[78px] items-center gap-[2px] whitespace-nowrap border border-b-0 border-[#6e7886] bg-linear-to-b from-[#e8f2fd] to-[#bcd9f5] tracking-[-0.14px]">
                    <Icon name="puzzlePage" className="size-[11px]" />
                    Prozessvariablen
                </div>
                <svg viewBox="0 0 8 8" className="mb-[6px] ml-auto mr-[3px] size-[6px]" stroke="#111" strokeWidth="2">
                    <path d="M1 1l6 6M7 1L1 7" />
                </svg>
            </div>
            <div className="h-[322px] bg-[#fcfcfc]">
                <VariableTable />
            </div>
            <div className="flex-1" />
            <div className="flex h-[11px] items-center border-t border-[#d0d0d0] bg-[#ececec]">
                <span className="ml-1 border-y-2 border-r-[3px] border-y-transparent border-r-[#444]" />
                <div className="ml-[355px] flex h-[8px] w-[378px] items-center justify-center gap-px rounded-[2px] border border-[#777] bg-linear-to-b from-[#efefef] via-[#bdbdbd] to-[#707070]">
                    <span className="h-1 w-px bg-[#333]" />
                    <span className="h-1 w-px bg-[#333]" />
                    <span className="h-1 w-px bg-[#333]" />
                </div>
                <span className="ml-auto mr-1 border-y-2 border-l-[3px] border-y-transparent border-l-[#222]" />
            </div>
            <div className="h-[2px] bg-[#777]" />
        </div>
    );
}

function StatusBar() {
    return (
        <div className="flex h-[17px] items-center whitespace-nowrap border-t border-[#fff] bg-[#f1f1f1] text-[8px] text-[#222]">
            <div className="flex h-[14px] w-[77px] shrink-0 items-center gap-[3px] border-r border-[#999] pl-[2px]">
                <Icon name="head" className="size-[9px]" />
                <span className="tracking-[-0.12px]">ITMAR\matthiasv</span>
            </div>
            <div className="h-[14px] w-[86px] shrink-0 border-r border-[#999]" />
            <div className="flex h-[14px] w-[395px] shrink-0 items-center border-r border-[#999] pl-[3px] tracking-[-0.08px]">
                Neues Projekt erzeugt:Projektierung_Einsteiger
            </div>
            <div className="h-[14px] w-[114px] shrink-0 border-r border-[#999]" />
            <div className="flex h-[14px] w-[114px] shrink-0 items-center gap-px border-r border-[#999] pl-[2px] text-[#b3242e]">
                <Icon name="filterTree" className="size-[11px]" />
                Kein Filter
            </div>
            <div className="flex items-center gap-[2px] pl-[2px] tracking-[-0.05px] text-[#b3242e]">
                <Icon name="cube" className="size-[11px]" />
                Keine Bibliothek
            </div>
        </div>
    );
}

function Taskbar() {
    return (
        <div className="relative flex h-[27px] items-stretch overflow-hidden bg-linear-to-r from-[#2f5f80] via-[#23527a] via-40% to-[#17437a] text-[8.5px] text-[#eef5fb]">
            <svg viewBox="0 0 40 27" className="absolute left-[700px] top-0 h-[27px] w-[40px]">
                <path d="M3 0h7l14 17z" fill="#b9d5e5" />
                <path d="M16 8l12 11 8 8h-7z" fill="#566272" />
            </svg>
            <div className="flex w-[38px] items-center justify-center">
                <svg viewBox="0 0 26 26" className="size-[26px]">
                    <circle cx="13" cy="13" r="12" fill="#315b78" stroke="#6f90a6" />
                    <path d="M2 9c6-8 17-8 22 0-8-3-15-3-22 0z" fill="#82a1b4" />
                    <path d="M7 8c2-2 4-1 5 0v5c-2-1-4-1-6 0z" fill="#cf6235" />
                    <path d="M13 8c2 1 4 1 6 0l-1 5c-2 1-4 0-5 0z" fill="#7aa65a" />
                    <path d="M6 14c2-1 4-1 6 0l-1 5c-2-1-4-1-5 0z" fill="#4f96c9" />
                    <path d="M13 14c2 1 3 1 5 0l-1 6c-2 1-3 0-5-1z" fill="#f0c04b" />
                </svg>
            </div>
            <div className="flex w-[48px] items-center justify-center">
                <svg viewBox="0 0 24 24" className="size-[22px]" fill="none">
                    <path d="M19 16c-2 5-12 6-13-2-1-9 12-11 13-1H7" stroke="#6ec5ec" strokeWidth="3.600" />
                    <path d="M3 21C-1 16 12 1 21 3c2 1 1 3 0 5" stroke="#e5c453" strokeWidth="1.8" />
                </svg>
            </div>
            <div className="flex w-[41px] items-center justify-center rounded-[2px] border border-[#9db5c4] bg-linear-to-b from-[#8fa8b6] to-[#426478]">
                <svg viewBox="0 0 26 22" className="h-[22px] w-[26px]">
                    <path d="M2 3l8-2 2 2h11v16H2z" fill="#cdb66d" stroke="#8c783c" />
                    <path d="M1 7h24l-1 13H2z" fill="#eddc96" stroke="#9d8849" />
                    <path d="M7 21v-7h12v7h-3v-4h-6v4z" fill="#a8d4ef" stroke="#4b7796" />
                </svg>
            </div>
            <div className="flex w-[45px] items-center justify-center">
                <svg viewBox="0 0 18 18" className="size-[18px]">
                    <path d="M6 1h11v15H6z" fill="#a7c5d5" stroke="#58798c" />
                    <path d="M2 3h11v13H2z" fill="#e27b2f" stroke="#a84b1c" />
                    <path d="M5 4l7 5-7 5z" fill="#fff" />
                </svg>
            </div>
            <div className="flex w-[42px] items-center justify-center rounded-[2px] border border-[#c5d5de] bg-linear-to-br from-[#d3dee4] to-[#7897a9]">
                <svg viewBox="0 0 20 22" className="h-[22px] w-[20px]">
                    <path d="M0 1h20v20H0z" fill="#153c66" />
                    <path d="M2 3h4v4H2zM8 3h4v4H8zM2 9h4v4H2zM8 9h4v4H8zM14 9h4v4h-4zM16 2l2 3-2 3-2-3z" fill="#eaf2f6" />
                    <path d="M6 16H3v3h3M8 16h4M10 16v4M14 15v4h3v-4" stroke="#eaf2f6" fill="none" />
                </svg>
            </div>
            <div className="ml-[2px] flex w-[41px] items-center justify-center rounded-[2px] border border-[#7f9fb5] bg-[#4f7590]">
                <svg viewBox="0 0 22 22" className="size-[22px]">
                    <path d="M0 0h22v22H0z" fill="#1010c8" />
                    <path d="M2.500 2.500h17v17h-17z" fill="none" stroke="#fff" />
                    <path d="M5 5h7v7H5zM13 13h4v4h-4z" fill="#fff" />
                    <path d="M9 6h2v2H9zM6 9h2v2H6z" fill="#1010c8" />
                    <path d="M14 14h2v2h-2z" fill="#1010c8" />
                </svg>
            </div>
            <div className="ml-auto flex items-center font-['Noto_Sans']">
                <span className="w-[22px] text-[8px]">DE</span>
                <span className="border-x-[3px] border-b-[3px] border-x-transparent border-b-white" />
                <svg viewBox="0 0 48 12" className="ml-[9px] mt-[2px] h-3 w-[48px]" fill="none" stroke="#fff">
                    <path d="M1.500 1v10" strokeWidth="1.500" />
                    <path d="M2 2h4l1 1h4v4H6L5 6H2z" fill="#fff" stroke="none" />
                    <path d="M20 2.500h8v6h-8zM22 11h5M18 1v5M16 3h4M18 6v4h3" />
                    <path d="M35 4h2l3-3v10l-3-3h-2z" fill="#fff" />
                    <path d="M42 4c1 1 1 3 0 4M44 2c2 2 2 6 0 8" />
                </svg>
                <div className="ml-[4px] flex w-[48px] flex-col items-center pt-px text-[8px] leading-[12px] tracking-[-0.15px]">
                    <span>14:09</span>
                    <span>21.11.2011</span>
                </div>
            </div>
            <div className="ml-[4px] w-[9px] border-l border-[#0d2f55] bg-[#2a5688]" />
        </div>
    );
}

export default function App() {
    return (
        <div className="flex h-[720px] w-[1280px] justify-center overflow-hidden bg-black font-['Liberation_Sans',sans-serif]">
            <div className="flex w-[900px] flex-col">
                <TitleBar />
                <MenuBar />
                <Toolbar />
                <div className="flex min-h-0 flex-1 bg-[#e8e8e8]">
                    <Sidebar />
                    <div className="w-[3px]" />
                    <Editor />
                </div>
                <StatusBar />
                <Taskbar />
            </div>
        </div>
    );
}
